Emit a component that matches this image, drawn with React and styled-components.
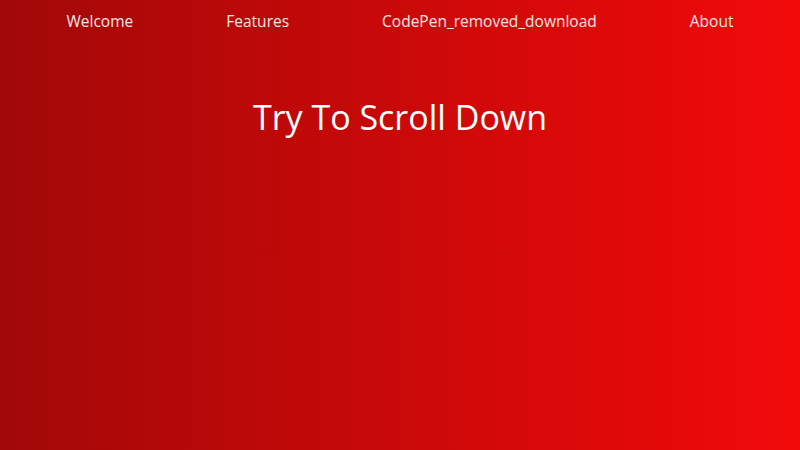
import React from 'react';
import styled, { createGlobalStyle } from 'styled-components';

const GlobalStyle = createGlobalStyle`
    html, body {
        margin: 0;
        padding: 0;
        height: 100%;
    }
    body {
        font-family: "Open Sans", "Liberation Sans", sans-serif;
        overflow: hidden;
    }
`;

const links = ['Welcome', 'Features', 'CodePen_removed_download', 'About'];

export default function App() {
    return (
        <Page>
            <GlobalStyle />
            <Nav>
                {links.map(link => (
                    <NavLink key={link} href="#">{link}</NavLink>
                ))}
            </Nav>
            <Title>Try To Scroll Down</Title>
        </Page>
    );
}

const Page = styled.div`
    width: 100%;
    height: 100vh;
    background: linear-gradient(to right, #a20808, #f20a0a);
    display: flex;
    flex-direction: column;
    align-items: center;
`;

const Nav = styled.nav`
    width: 100%;
    box-sizing: border-box;
    display: flex;
    justify-content: space-around;
    padding: 11px 20px 0;
`;

const NavLink = styled.a`
    color: #f6e6e6;
    text-decoration: none;
    font-size: 15.5px;
    line-height: 20px;
`;

const Title = styled.h1`
    margin: 63px 0 0;
    color: #ffffff;
    font-size: 34px;
    font-weight: 400;
    line-height: 46px;
`;
